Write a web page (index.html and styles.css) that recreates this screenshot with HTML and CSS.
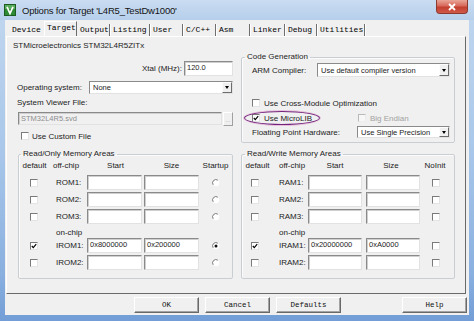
FILE: index.html
```html
<!DOCTYPE html>
<html>
<head>
<meta charset="utf-8">
<title>Options for Target</title>
<link rel="stylesheet" href="styles.css">
</head>
<body>
<div class="window">
  <div class="titlebar">
    <svg class="appicon" viewBox="0 0 12 12"><rect x="0.5" y="0.5" width="11" height="11" fill="#2e8b34" stroke="#1c5c20"/><rect x="1" y="1" width="10" height="4" fill="#7cc87f" opacity=".55"/><path d="M3 2.8 L6 9.5 L9 2.8" fill="none" stroke="#ffffff" stroke-width="1.7"/></svg>
    <span class="title">Options for Target 'L4R5_TestDw1000'</span>
    <div class="close"><svg viewBox="0 0 10 8" class="closex"><path d="M2 1 L8 7 M8 1 L2 7" stroke="#fff" stroke-width="1.8" fill="none"/></svg></div>
  </div>
  <div class="client">
    <div class="tabs">
      <span class="tab tw-device nosep">Device</span>
      <span class="tab sel tw-target">Target</span>
      <span class="tab tw-output">Output</span>
      <span class="tab tw-listing">Listing</span>
      <span class="tab tw-user">User</span>
      <span class="tab tw-cpp">C/C++</span>
      <span class="tab tw-asm">Asm</span>
      <span class="tab tw-linker">Linker</span>
      <span class="tab tw-debug">Debug</span>
      <span class="tab tw-util">Utilities</span>
    </div>
    <div class="panel">
      <div class="vendor">STMicroelectronics STM32L4R5ZITx</div>
      <div class="top">
        <div class="leftcol">
          <div class="xtal"><span>Xtal (MHz):</span><span class="edit xtal-edit">120.0</span></div>
          <div class="os"><span class="os-lbl">Operating system:</span><span class="combo os-combo"><span class="ctext">None</span><span class="drop"></span></span></div>
          <div class="svf-lbl">System Viewer File:</div>
          <div class="svf"><span class="edit disabled svf-edit">STM32L4R5.svd</span><span class="browse">...</span></div>
          <div class="chkrow custom"><span class="chk"></span><span>Use Custom File</span></div>
        </div>
        <fieldset class="group codegen">
          <legend>Code Generation</legend>
          <div class="cg-inner">
            <div class="cg-arm"><span class="arm-lbl">ARM Compiler:</span><span class="combo arm-combo"><span class="ctext">Use default compiler version</span><span class="drop"></span></span></div>
            <div class="chkrow cg-cross"><span class="chk"></span><span>Use Cross-Module Optimization</span></div>
            <div class="cg-micro">
              <div class="chkrow microlib"><span class="chk"><svg viewBox="0 0 6 6" class="tick"><path d="M0.8 3 L2.3 4.6 L5.2 1.2" fill="none" stroke="#000" stroke-width="1.2"/></svg></span><span>Use MicroLIB</span><span class="ring"></span></div>
              <div class="chkrow bigendian"><span class="chk dis"></span><span>Big Endian</span></div>
            </div>
            <div class="cg-fph"><span class="fph-lbl">Floating Point Hardware:</span><span class="combo fph-combo"><span class="ctext">Use Single Precision</span><span class="drop"></span></span></div>
          </div>
        </fieldset>
      </div>
      <div class="mem">
        <fieldset class="group rom">
          <legend>Read/Only Memory Areas</legend>
          <div class="mrow hdr"><span class="c">default</span><span class="offchip">off-chip</span><span class="c">Start</span><span class="c">Size</span><span class="c">Startup</span></div>
          <div class="mrow r1"><span class="chk"></span><span class="lab">ROM1:</span><span class="edit e1"></span><span class="edit e2"></span><svg class="radio" viewBox="0 0 8 8"><circle cx="4" cy="4" r="3.3" fill="#fff"/><path d="M1.2 5.8 A3.3 3.3 0 0 1 5.8 1.2" fill="none" stroke="#777" stroke-width="1"/></svg></div>
          <div class="mrow r2"><span class="chk"></span><span class="lab">ROM2:</span><span class="edit e1"></span><span class="edit e2"></span><svg class="radio" viewBox="0 0 8 8"><circle cx="4" cy="4" r="3.3" fill="#fff"/><path d="M1.2 5.8 A3.3 3.3 0 0 1 5.8 1.2" fill="none" stroke="#777" stroke-width="1"/></svg></div>
          <div class="mrow r2"><span class="chk"></span><span class="lab">ROM3:</span><span class="edit e1"></span><span class="edit e2"></span><svg class="radio" viewBox="0 0 8 8"><circle cx="4" cy="4" r="3.3" fill="#fff"/><path d="M1.2 5.8 A3.3 3.3 0 0 1 5.8 1.2" fill="none" stroke="#777" stroke-width="1"/></svg></div>
          <div class="mrow sub"><span></span><span class="lab">on-chip</span></div>
          <div class="mrow r0"><span class="chk"><svg viewBox="0 0 6 6" class="tick"><path d="M0.8 3 L2.3 4.6 L5.2 1.2" fill="none" stroke="#000" stroke-width="1.2"/></svg></span><span class="lab">IROM1:</span><span class="edit e1">0x8000000</span><span class="edit e2">0x200000</span><svg class="radio" viewBox="0 0 8 8"><circle cx="4" cy="4" r="3.3" fill="#fff"/><path d="M1.2 5.8 A3.3 3.3 0 0 1 5.8 1.2" fill="none" stroke="#777" stroke-width="1"/><circle cx="4" cy="4" r="1.5" fill="#111"/></svg></div>
          <div class="mrow r2"><span class="chk"></span><span class="lab">IROM2:</span><span class="edit e1"></span><span class="edit e2"></span><svg class="radio" viewBox="0 0 8 8"><circle cx="4" cy="4" r="3.3" fill="#fff"/><path d="M1.2 5.8 A3.3 3.3 0 0 1 5.8 1.2" fill="none" stroke="#777" stroke-width="1"/></svg></div>
        </fieldset>
        <fieldset class="group ram">
          <legend>Read/Write Memory Areas</legend>
          <div class="mrow hdr"><span class="c">default</span><span class="offchip">off-chip</span><span class="c">Start</span><span class="c">Size</span><span class="c">NoInit</span></div>
          <div class="mrow r1"><span class="chk"></span><span class="lab">RAM1:</span><span class="edit e1"></span><span class="edit e2"></span><span class="chk ni"></span></div>
          <div class="mrow r2"><span class="chk"></span><span class="lab">RAM2:</span><span class="edit e1"></span><span class="edit e2"></span><span class="chk ni"></span></div>
          <div class="mrow r2"><span class="chk"></span><span class="lab">RAM3:</span><span class="edit e1"></span><span class="edit e2"></span><span class="chk ni"></span></div>
          <div class="mrow sub"><span></span><span class="lab">on-chip</span></div>
          <div class="mrow r0"><span class="chk"><svg viewBox="0 0 6 6" class="tick"><path d="M0.8 3 L2.3 4.6 L5.2 1.2" fill="none" stroke="#000" stroke-width="1.2"/></svg></span><span class="lab">IRAM1:</span><span class="edit e1">0x20000000</span><span class="edit e2">0xA0000</span><span class="chk ni"></span></div>
          <div class="mrow r2"><span class="chk"></span><span class="lab">IRAM2:</span><span class="edit e1"></span><span class="edit e2"></span><span class="chk ni"></span></div>
        </fieldset>
      </div>
    </div>
    <div class="buttons">
      <span class="btn">OK</span>
      <span class="btn">Cancel</span>
      <span class="btn">Defaults</span>
      <span class="btn help">Help</span>
    </div>
  </div>
</div>
</body>
</html>
```
FILE: styles.css
```css
* { box-sizing: border-box; }
body {
  margin: 0;
  font-family: "Liberation Sans", Arial, sans-serif;
  font-size: 8px;
  color: #1c1c1c;
}
.window {
  width: 474px;
  height: 321px;
  display: flex;
  flex-direction: column;
  overflow: hidden;
  background: linear-gradient(180deg, #c2d7ef 0%, #aac8ea 45%, #8ab0e0 85%, #729dd6 100%);
}
.titlebar {
  height: 20px;
  flex: none;
  display: flex;
  align-items: center;
  background: linear-gradient(180deg, #cadcf1 0%, #b6cfeb 100%);
}
.appicon { width: 12px; height: 12px; margin-left: 4px; flex: none; }
.title {
  margin-left: 6px;
  font-size: 9.5px;
  letter-spacing: -0.2px;
  color: #141414;
}
.close {
  margin-left: auto;
  margin-right: 6px;
  align-self: flex-start;
  width: 32px;
  height: 14px;
  border: 1px solid #8c3a30;
  border-top: none;
  border-radius: 0 0 4px 4px;
  background: linear-gradient(180deg, #e9a597 0%, #d7695b 45%, #c3402f 55%, #d0594a 100%);
  display: flex;
  align-items: center;
  justify-content: center;
}
.closex { width: 10px; height: 8px; }

.client {
  flex: 1;
  margin: 0 5px 6px 5px;
  background: #f0f0f0;
  display: flex;
  flex-direction: column;
}

/* tabs */
.tabs {
  height: 16px;
  flex: none;
  display: flex;
  align-items: flex-end;
  padding-left: 4px;
  font-family: "Liberation Mono", "Courier New", monospace;
  font-size: 8px;
  color: #000;
}
.tab {
  height: 12px;
  line-height: 11px;
  padding-left: 3px;
  border-right: 1px solid #6e6e6e;
  box-shadow: 1px 0 0 #ffffff;
  white-space: nowrap;
}
.tab.nosep { border-right: none; box-shadow: none; }
.tab.sel {
  height: 15px;
  line-height: 12px;
  padding-left: 2px;
  border-top: 1px solid #fff;
  border-left: 1px solid #fff;
  border-right: 1px solid #6c6c6c;
  box-shadow: none;
}
.tw-device { width: 35px; }
.tw-target { width: 33px; }
.tw-output { width: 33px; }
.tw-listing { width: 40px; }
.tw-user { width: 33px; }
.tw-cpp { width: 33px; }
.tw-asm { width: 34px; }
.tw-linker { width: 35px; }
.tw-debug { width: 32px; }
.tw-util { width: 48px; }

/* panel */
.panel {
  height: 258px;
  flex: none;
  margin: 0 3px 0 1px;
  border-top: 1px solid #fff;
  border-left: 1px solid #fff;
  border-right: 1px solid #6a6a6a;
  border-bottom: 1px solid #6a6a6a;
  padding: 4px 0 0 6px;
}
.vendor { height: 10px; line-height: 10px; }
.top { display: flex; gap: 8px; margin-left: 4px; }
.leftcol { width: 216px; display: flex; flex-direction: column; }

.edit {
  display: block;
  background: #fff;
  border: 1px solid;
  border-color: #8a8a8a #e2e2e2 #e2e2e2 #8a8a8a;
  box-shadow: inset 1px 1px 0 #cfcfcf;
  padding: 0 0 0 2px;
  font-size: 7.5px;
  line-height: 10px;
  white-space: nowrap;
  overflow: hidden;
  color: #222;
}
.edit.disabled { background: #f0f0f0; color: #8e8e8e; }

.combo {
  display: flex;
  align-items: center;
  background: #fff;
  border: 1px solid;
  border-color: #8a8a8a #e2e2e2 #e2e2e2 #8a8a8a;
  padding-left: 3px;
  white-space: nowrap;
  font-size: 7.5px;
}
.ctext { flex: 1; overflow: hidden; min-width: 0; }
.drop {
  flex: none;
  width: 10px;
  height: 100%;
  background: #f0f0f0;
  border: 1px solid;
  border-color: #fdfdfd #6c6c6c #6c6c6c #fdfdfd;
  display: flex;
  align-items: center;
  justify-content: center;
}
.drop::after {
  content: "";
  border-top: 3px solid #000;
  border-left: 2.5px solid transparent;
  border-right: 2.5px solid transparent;
}

.xtal {
  margin-top: 10px;
  height: 15px;
  display: flex;
  align-items: center;
  justify-content: flex-end;
  gap: 2px;
}
.xtal-edit { width: 49px; height: 15px; padding-top: 1px; }
.os { margin-top: 5px; height: 13px; display: flex; align-items: center; }
.os-lbl { width: 72px; }
.os-combo { width: 144px; height: 13px; }
.svf-lbl { margin-top: 3px; height: 12px; line-height: 12px; }
.svf { margin-top: 3px; height: 14px; display: flex; gap: 1px; padding-left: 1px; }
.svf-edit { width: 204px; height: 13px; line-height: 11px; }
.browse {
  width: 10px;
  height: 14px;
  background: #f0f0f0;
  border: 1px solid;
  border-color: #fff #a0a0a0 #a0a0a0 #fff;
  color: #9a9a9a;
  font-size: 6px;
  line-height: 14px;
  text-align: center;
}

.chkrow { display: flex; align-items: center; height: 12px; gap: 4px; white-space: nowrap; }
.custom { margin-top: 4px; padding-left: 4px; gap: 3px; }
.chk {
  width: 8px;
  height: 8px;
  flex: none;
  background: #fff;
  border: 1px solid;
  border-color: #7a7a7a #e4e4e4 #e4e4e4 #7a7a7a;
  display: flex;
  align-items: center;
  justify-content: center;
}
.chk.dis { border-color: #b9b9b9 #ececec #ececec #b9b9b9; background: #f7f7f7; }
.tick { width: 6px; height: 6px; }

/* group boxes */
.group {
  margin: 0;
  padding: 0;
  min-width: 0;
  border: 1px solid #c9ced3;
  border-radius: 2px;
  box-shadow: inset 1px 1px 0 #fbfbfb;
}
.group legend {
  padding: 0 2px;
  line-height: 12px;
  height: 12px;
}
.codegen { width: 214px; }
.codegen legend { margin-left: 3px; }
.cg-inner { padding: 0 0 4px 10px; }
.cg-arm { height: 14px; display: flex; align-items: center; }
.arm-lbl { width: 65px; }
.arm-combo { width: 133px; height: 14px; }
.cg-cross { margin-top: 20px; }
.cg-micro { margin-top: 3px; display: flex; }
.microlib { width: 106px; position: relative; }
.bigendian { color: #a2a2a2; }
.ring {
  position: absolute;
  left: -8px;
  top: -1px;
  width: 76px;
  height: 14px;
  border: 1.6px solid #74237c;
  border-radius: 50%;
  box-shadow: 0 0 0 1px rgba(225, 160, 205, 0.6);
}
.cg-fph { margin-top: 2px; height: 12px; display: flex; align-items: center; }
.fph-lbl { width: 105px; }
.fph-combo { width: 93px; height: 12px; }

/* memory */
.mem { display: flex; gap: 8px; margin-top: 5px; margin-left: 5px; }
.rom { width: 215px; padding-bottom: 8px; }
.ram { width: 214px; padding-bottom: 8px; }
.rom legend { margin-left: 2px; }
.ram legend { margin-left: 3px; }
.mrow {
  display: grid;
  height: 15px;
  align-items: center;
  white-space: nowrap;
}
.rom .mrow { grid-template-columns: 31px 37px 57px 55px 33px; }
.ram .mrow { grid-template-columns: 31px 35px 58px 54px 34px; }
.mrow.hdr { height: 10px; }
.mrow.r1 { margin-top: 5px; }
.mrow.r2 { margin-top: 2px; }
.mrow.sub { height: 11px; margin-top: 3px; }
.c { text-align: center; }
.rom .offchip { padding-left: 3px; }
.ram .offchip { padding-left: 6px; }
.ram .hdr .c:nth-child(3), .ram .hdr .c:nth-child(4), .ram .hdr .c:nth-child(5) { padding-right: 4px; }
.lab { padding-left: 6px; }
.mrow .edit { height: 15px; padding-top: 1px; }
.rom .e1, .rom .e2 { width: 55px; }
.ram .e1, .ram .e2 { width: 54px; }
.rom .mrow > .chk { margin-left: 11px; }
.ram .mrow > .chk { margin-left: 9px; }
.ram .mrow > .chk.ni { margin-left: 12px; }
.radio { width: 8px; height: 8px; justify-self: center; }

/* buttons */
.buttons {
  height: 16px;
  margin-top: 3px;
  flex: none;
  display: flex;
  gap: 6px;
  padding-left: 129px;
  padding-right: 2px;
}
.btn {
  width: 65px;
  height: 16px;
  background: #f0f0f0;
  border: 1px solid;
  border-color: #ffffff #696969 #696969 #ffffff;
  box-shadow: inset -1px -1px 0 #a3a3a3;
  font-family: "Liberation Mono", "Courier New", monospace;
  font-size: 7.5px;
  line-height: 14px;
  text-align: center;
  color: #111;
}
.btn.help { margin-left: auto; }
```
